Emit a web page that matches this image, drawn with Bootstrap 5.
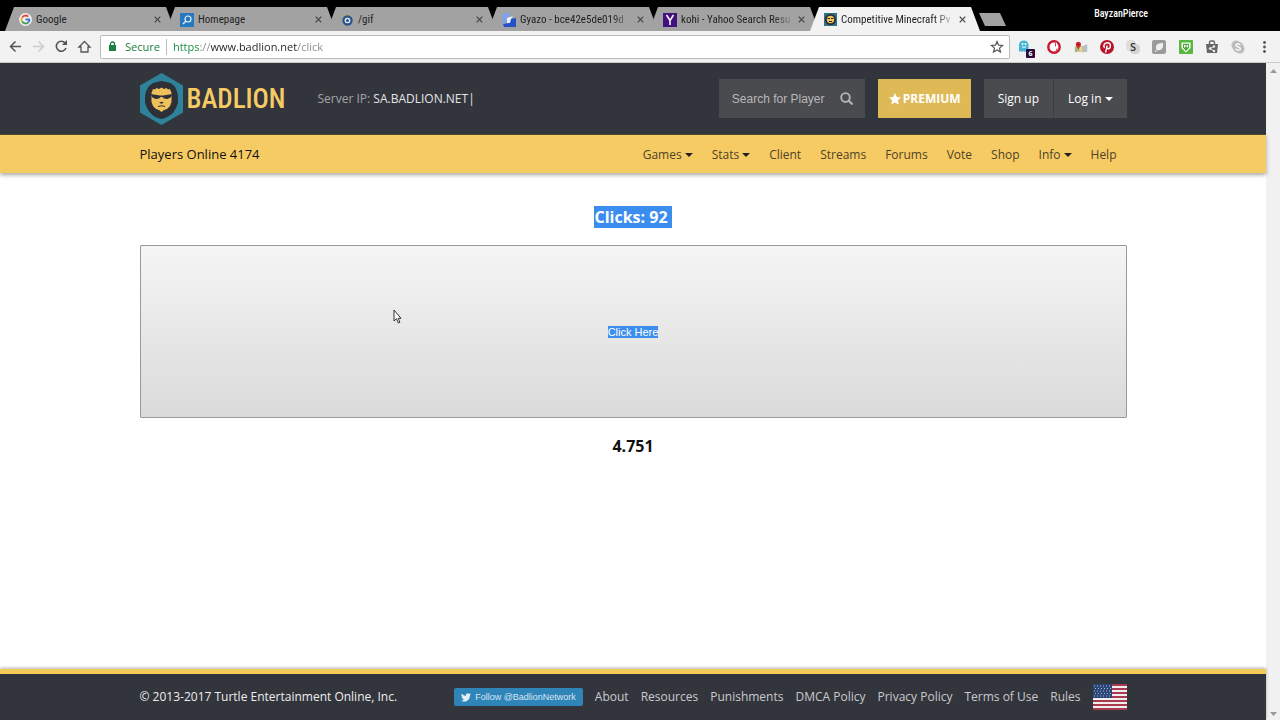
<!DOCTYPE html>
<html lang="en">
<head>
<meta charset="utf-8">
<meta name="viewport" content="width=device-width, initial-scale=1">
<title>Competitive Minecraft PvP</title>
<link href="https://cdn.jsdelivr.net/npm/bootstrap@5.3.0/dist/css/bootstrap.min.css" rel="stylesheet">
<style>
:root { --dark: #33353d; --gold: #f7cb63; --teal: #2e8299; }
body { font: 13px/20px "Open Sans", sans-serif; color: #111; background: #fff; }
a { text-decoration: none; }
svg { display: block; flex: none; }

/* browser chrome */
.tab-strip { height: 31px; background: #000; padding-left: 5px; }
.tab-list { flex: 0 1 966px; min-width: 0; }
.browser-tab { flex: 1 1 0; min-width: 0; height: 24px; margin-right: -9px; padding: 1px 14px 0; gap: 4px;
  background: #a2a2a2; color: #222; font: 11px/22px "Roboto Condensed", Roboto, sans-serif;
  clip-path: polygon(9px 0, calc(100% - 9px) 0, 100% 100%, 0 100%); }
.browser-tab.current { background: #f2f2f2; z-index: 2; }
.tab-title { color: inherit; overflow: hidden; white-space: nowrap; flex: 1; min-width: 0; }
.faded { -webkit-mask-image: linear-gradient(90deg, #000 82%, transparent); mask-image: linear-gradient(90deg, #000 82%, transparent); }
.plain-btn { border: 0; background: none; padding: 0; color: inherit; }
.new-tab { width: 27px; height: 13px; margin: 8px 0 0 8px; background: #a2a2a2; clip-path: polygon(0 0, 21px 0, 27px 100%, 6px 100%); }
.profile { font: 500 10px/28px "Roboto Condensed", Roboto, sans-serif; color: #fff; margin-right: 132px; }
.tool-bar { height: 32px; background: #f2f2f2; border-bottom: 1px solid #c9cbc9; padding: 0 11px 0 8px; }
.address { height: 24px; background: #fff; border: 1px solid #bbb; border-radius: 2px; padding: 0 5px 0 7px; font-size: 11px; }
.secure { color: #1b8043; font-size: 11px; padding-right: 6px; margin-right: 6px; border-right: 1px solid #bbb; line-height: 16px; }
.address input { flex: 1; min-width: 0; border: 0; outline: 0; padding: 0; color: #222; font-size: 11px;
  background: linear-gradient(90deg, #0f8a3f 27px, #888 27px 38px, #222 38px 124px, #888 124px) text;
  -webkit-background-clip: text; -webkit-text-fill-color: transparent; }
.ext { width: 227px; margin: 0 15px 0 8px; }

/* site */
.site { min-height: calc(100vh - 63px); border-right: 14px solid #f1f1f1; }
.wrap { width: 78%; max-width: 987px; margin: 0 auto; }
.site-head { background: var(--dark); height: 71px; }
.brand-name { font: 500 27px/36px "Roboto Condensed", Roboto, sans-serif; color: var(--gold); }
.brand { width: 143px; }
.server { color: #a3a4a8; font-size: 12px; margin-left: 35px; }
.server span { color: #e4e4e6; }
.head-tools { gap: 13px; }
.search { height: 39px; width: 146px; background: #4a4b4e; padding: 0 12px 0 13px; }
.search input { flex: 1; min-width: 0; border: 0; outline: 0; background: none; color: #fff; padding: 0; font: 12px/20px "Liberation Sans", sans-serif; }
.search input::placeholder { color: #b7b8ba; opacity: 1; }
.head-btn { height: 39px; border: 0; border-radius: 0; background: #4a4b4e; color: #fff; font-size: 12px; padding: 0 14px; }
.head-btn + .head-btn { border-left: 1px solid #3c3d43; }
.premium { background: #e0b957; font-weight: 700; padding: 0 10px 0 11px; gap: 2px; }
.site-nav { background: var(--gold); height: 39px; border-top: 1px solid #4f4836; box-shadow: 0 2px 4px rgba(0,0,0,.35); position: relative; }
.site-nav a { color: #4d4227; font-size: 12px; }
.menu-links { gap: 19px; padding: 1px 10px 0 0; }
.dropdown-toggle::after { margin-left: 3px; vertical-align: 2px; border-top-width: 4px; border-left-width: 4px; border-right-width: 4px; color: #222; }
.head-btn.dropdown-toggle::after { color: #fff; }
.picked { background: #3b8df0; color: #fff; }
.clicker { padding-top: 33px; }
.score { font-size: 16px; line-height: 22px; font-weight: 700; margin: 0; }
.click-pad { width: 100%; height: 173px; border: 1px solid #999; border-radius: 1px; background: linear-gradient(#f5f5f5, #dadada);
  font: 11px/14px "Liberation Sans", sans-serif; margin: 17px 0; }
.pointer { position: absolute; left: 253px; top: 81px; }
.site-foot { background: var(--dark); border-top: 5px solid #f2cb59; box-shadow: 0 -1px 3px rgba(0,0,0,.3); height: 51px; font-size: 12px; color: #eee; }
.foot-links { gap: 12px; }
.foot-links a { color: #c9cacc; }
.foot-links .follow { background: #2f84b8; color: #d6e6f2; border-radius: 2px; height: 18px; padding: 0 7px; gap: 4px; font: 9px/16px "Liberation Sans", sans-serif; }
.scroll-marks { position: absolute; right: 0; top: 64px; bottom: 0; width: 14px; padding: 5px 0 4px; }
</style>
</head>
<body class="d-flex flex-column min-vh-100 position-relative">

<header>
  <div class="tab-strip d-flex align-items-end">
    <nav class="tab-list d-flex" aria-label="Tabs">
      <div class="browser-tab d-flex align-items-center">
        <svg width="13" height="13" viewBox="0 0 14 14"><circle cx="7" cy="7" r="7" fill="#eee"/><g fill="none" stroke-width="2"><path d="M3.3 5A4.2 4.2 0 0 1 10 4" stroke="#df4b3c"/><path d="M3.3 5a4.2 4.2 0 0 0 0 4" stroke="#eab52c"/><path d="M3.3 9A4.2 4.2 0 0 0 10 10" stroke="#3b9d50"/><path d="M10 10a4 4 0 0 0 1.1-3H7" stroke="#3d78d8"/></g></svg>
        <a href="#" class="tab-title">Google</a><button class="plain-btn" aria-label="Close"><svg width="7" height="7" viewBox="0 0 7 7"><path d="M.7.7l5.6 5.6M6.3.7L.7 6.3" stroke="#444" stroke-width="1.2"/></svg></button>
      </div>
      <div class="browser-tab d-flex align-items-center">
        <svg width="14" height="14" viewBox="0 0 14 14"><path fill="#2878be" d="M0 0h14v14H0z"/><circle cx="8" cy="6" r="3" fill="none" stroke="#e6f0fa" stroke-width="1.2"/><path d="M6 8l-3 3" stroke="#e6f0fa" stroke-width="1.4"/></svg>
        <a href="#" class="tab-title">Homepage</a><button class="plain-btn" aria-label="Close"><svg width="7" height="7" viewBox="0 0 7 7"><path d="M.7.7l5.6 5.6M6.3.7L.7 6.3" stroke="#444" stroke-width="1.2"/></svg></button>
      </div>
      <div class="browser-tab d-flex align-items-center">
        <svg width="13" height="13" viewBox="0 0 13 13"><path d="M2 5l-1-3 3 1 2-2 2 2 3-1-1 3" fill="#bba85a"/><circle cx="6.5" cy="7.5" r="4" fill="none" stroke="#28558f" stroke-width="2.4"/><circle cx="6.5" cy="7.500" r="2.800" fill="#e4eaf3"/><circle cx="6.500" cy="7.500" r="1.500" fill="#28558f"/></svg>
        <a href="#" class="tab-title">/gif</a><button class="plain-btn" aria-label="Close"><svg width="7" height="7" viewBox="0 0 7 7"><path d="M.7.7l5.6 5.6M6.3.7L.7 6.3" stroke="#444" stroke-width="1.2"/></svg></button>
      </div>
      <div class="browser-tab d-flex align-items-center">
        <svg width="14" height="14" viewBox="0 0 14 14"><path d="M0 1l9-1-3 5v4l-5 2z" fill="#7ba4ed"/><path d="M1 11l6-1 1-4 6-1v9H2z" fill="#2452c4"/><path d="M5 5l6-2-2 3-1 4-3 0z" fill="#eef3ff"/></svg>
        <a href="#" class="tab-title faded">Gyazo - bce42e5de019d</a><button class="plain-btn" aria-label="Close"><svg width="7" height="7" viewBox="0 0 7 7"><path d="M.7.7l5.6 5.6M6.3.7L.7 6.3" stroke="#444" stroke-width="1.2"/></svg></button>
      </div>
      <div class="browser-tab d-flex align-items-center">
        <svg width="14" height="14" viewBox="0 0 14 14"><path fill="#43107f" d="M0 0h14v14H0z"/><path d="M3.5 2L7 7.5 10.500 2M7 7v5" fill="none" stroke="#fff" stroke-width="1.5"/></svg>
        <a href="#" class="tab-title faded">kohi - Yahoo Search Resu</a><button class="plain-btn" aria-label="Close"><svg width="7" height="7" viewBox="0 0 7 7"><path d="M.7.7l5.6 5.6M6.3.7L.7 6.3" stroke="#444" stroke-width="1.2"/></svg></button>
      </div>
      <div class="browser-tab current d-flex align-items-center">
        <svg width="13" height="13" viewBox="0 0 13 13"><path fill="#2e7387" d="M0 0h13v13H0z"/><circle cx="6.500" cy="6.500" r="5.500" fill="#2c2d33"/><circle cx="6.500" cy="6.500" r="3.700" fill="#efc15a"/><path d="M3.500 5.500h2.500M7 5.500h2.500M5 8.500h3" stroke="#2c2d33"/></svg>
        <a href="#" class="tab-title faded">Competitive Minecraft Pv</a><button class="plain-btn" aria-label="Close"><svg width="7" height="7" viewBox="0 0 7 7"><path d="M.7.7l5.6 5.6M6.3.7L.7 6.3" stroke="#444" stroke-width="1.2"/></svg></button>
      </div>
    </nav>
    <button class="plain-btn new-tab align-self-center" aria-label="New tab"></button>
    <span class="profile ms-auto align-self-start">BayzanPierce</span>
  </div>

  <div class="tool-bar d-flex align-items-center">
    <div class="d-flex gap-2 me-2">
      <button class="plain-btn" aria-label="Back"><svg width="15" height="15" viewBox="0 0 15 15" fill="none" stroke="#555" stroke-width="1.5"><path d="M13 7.500H2.500M7.500 2.500l-5 5 5 5"/></svg></button>
      <button class="plain-btn" aria-label="Forward"><svg width="15" height="15" viewBox="0 0 15 15" fill="none" stroke="#ccc" stroke-width="1.500"><path d="M2 7.500h10.500M7.500 2.500l5 5-5 5"/></svg></button>
      <button class="plain-btn" aria-label="Reload"><svg width="15" height="15" viewBox="0 0 15 15"><path d="M12 9a5 5 0 1 1-.8-5" fill="none" stroke="#555" stroke-width="1.600"/><path d="M13 1v5H8z" fill="#555"/></svg></button>
      <button class="plain-btn" aria-label="Home"><svg width="15" height="15" viewBox="0 0 15 15" fill="none" stroke="#555" stroke-width="1.300"><path d="M2 8l5.500-5.500L13 8h-2v5H4V8z"/></svg></button>
    </div>
    <div class="address d-flex align-items-center flex-grow-1">
      <svg class="me-2" width="9" height="11" viewBox="0 0 9 11"><path d="M1 4h7v6H1z" fill="#1b8043"/><path d="M2.500 5V3a2 2 0 0 1 4 0v2" fill="none" stroke="#1b8043" stroke-width="1.300"/></svg>
      <label class="secure" for="url">Secure</label>
      <input id="url" type="text" value="https://www.badlion.net/click" spellcheck="false">
      <button class="plain-btn" aria-label="Bookmark"><svg width="14" height="14" viewBox="0 0 14 14"><path d="M7 1.500l1.600 3.700 4 .3-3.100 2.600 1 3.900L7 9.900 3.500 12l1-3.900L1.400 5.500l4-.3z" fill="none" stroke="#555" stroke-width="1.200"/></svg></button>
    </div>
    <div class="ext d-flex align-items-center justify-content-between">
      <svg width="17" height="24" viewBox="0 0 17 24"><path d="M1 17V9a5 5 0 0 1 9.500 0v8l-2-1-1.500 1-1.500-1-1.500 1-1.500-1z" fill="#45b6d6"/><circle cx="4.500" cy="9" r="1" fill="#fff"/><circle cx="7.500" cy="9" r="1" fill="#fff"/><path d="M4 11.500q2 2 4 0" stroke="#fff" fill="none"/><rect x="8" y="14" width="9" height="9" rx="1" fill="#2c0a3a"/><text x="12.500" y="21" font-size="7" font-weight="700" fill="#fff" text-anchor="middle">6</text></svg>
      <svg width="14" height="14" viewBox="0 0 14 14"><circle cx="7" cy="7" r="5.700" fill="#fff" stroke="#cc1730" stroke-width="2.400"/><path d="M4.500 3.500L10 2.500V8l-1.500 3H6L4 8z" fill="#fff"/><path d="M8.500 3v3.500M10 8.500L9 11" stroke="#cc1730" stroke-width=".8"/></svg>
      <svg width="14" height="14" viewBox="0 0 16 14"><path d="M1 7l4-2 5 1 5-2v8l-5 1-5-1-4 1z" fill="#9fb97f"/><path d="M6 13V6l4 1v6z" fill="#e7d38a"/><path d="M10 6l5-2v8l-5 1z" fill="#b4bec9"/><path d="M5 10C4 7 2 6 2 4a3 3 0 0 1 6 0c0 2-2 3-3 6" fill="#d32b2f"/><circle cx="5" cy="4" r="1.100" fill="#7c1017"/></svg>
      <svg width="14" height="14" viewBox="0 0 14 14"><circle cx="7" cy="7" r="7" fill="#b9132a"/><path d="M5.600 12.500L7.200 5.500M4.500 8C2.600 4.500 5.300 2.700 7.300 2.700c4.400 0 3.600 6 .8 6-1.300 0-1.600-.9-1.600-.9" fill="none" stroke="#fff" stroke-width="1.400"/></svg>
      <svg width="14" height="16" viewBox="0 0 14 16"><rect x="0" y="1" width="10" height="11" rx="4" fill="#ddd"/><rect x="4" y="5" width="10" height="10" rx="4" fill="#d4d4d4"/><text x="7" y="12" font-size="11" font-weight="600" fill="#333" text-anchor="middle">S</text></svg>
      <svg width="14" height="14" viewBox="0 0 14 14"><rect width="14" height="14" rx="2" fill="#9b9b9b"/><path d="M4 6q1-3 7-3v4q-1 3-5 3.500L4 9z" fill="#eee"/><path d="M3 12l2.500-3" stroke="#eee"/></svg>
      <svg width="14" height="14" viewBox="0 0 14 14"><rect width="14" height="14" rx="1" fill="#56b93d"/><path d="M2.500 2.500h9V8L7 12.500 2.500 8z" fill="#fff"/><path d="M4 3.700h6v4L7 11 4 7.700z" fill="#4da638"/><path d="M5.500 7.500V5L7 6.500 8.500 5v2.500" stroke="#fff" fill="none"/></svg>
      <svg width="14" height="14" viewBox="0 0 14 14"><path d="M1 4h12l-1 9H2z" fill="#666"/><path d="M4.500 5V2.500A1.500 1.500 0 0 1 6 1h2a1.500 1.500 0 0 1 1.500 1.500V5" fill="none" stroke="#666" stroke-width="1.400"/><path d="M9 6.500l-4 2 4 2.500" fill="none" stroke="#eee"/><g fill="#eee"><circle cx="9" cy="6.500" r="1.200"/><circle cx="5" cy="8.500" r="1.200"/><circle cx="9" cy="11" r="1.200"/></g></svg>
      <svg width="14" height="14" viewBox="0 0 14 14"><circle cx="5" cy="5" r="4.500" fill="#bdbdbd"/><circle cx="9" cy="9" r="4.500" fill="#bdbdbd"/><circle cx="7" cy="7" r="5.500" fill="#bdbdbd"/><path d="M9.300 5C8.500 3.300 4.800 3.500 5 5.400c.2 1.700 4.300 1.200 4.300 3.200 0 2.100-4 2-4.700.2" fill="none" stroke="#fff" stroke-width="1.300"/></svg>
    </div>
    <button class="plain-btn" aria-label="Menu"><svg width="9" height="14" viewBox="0 0 9 14" fill="#555"><circle cx="4.500" cy="2.500" r="1.400"/><circle cx="4.500" cy="7" r="1.400"/><circle cx="4.500" cy="11.500" r="1.400"/></svg></button>
  </div>
</header>

<div class="site d-flex flex-column flex-grow-1">
  <div class="site-head d-flex align-items-center">
    <div class="wrap d-flex align-items-center">
      <a href="#" class="brand d-flex align-items-center gap-1" aria-label="Badlion home">
        <svg width="43" height="52" viewBox="0 0 43 52"><path d="M21.500 0L43 12.500v27L21.500 52 0 39.500v-27z" fill="#2e8299"/><path d="M9 13l4-3 4-1 4.500-1 5 1 4 1 4 3 2 4 1.500 5v8l-2 5-3 5-4 3-4 2-3.500 1-4-1-4-2-4-4-2.500-4L5 30v-7l1-5z" fill="#2e3037"/><path d="M13 16l2 .5 1.500-1.500 2.500 1 2.500-1.500L24 16l2.500-1 1.500 1.500 2-.5 1.500 4v9l-1.500 4-3 3-3 1-2.500 2-2.500-2-3-1-3-3-1.500-4v-9z" fill="#efc15a"/><path d="M10.500 21l9.500 1.500h3l9.500-1.500-2 3.500-3 1.500-3.500-.5-1.500-1.500h-2l-1.500 1.500-3.500.5-3-1.500z" fill="#2e3037"/><path d="M19 29h5l-2.500 2z" fill="#2e3037"/><path d="M18 33.500q3.500-1.500 7 0" fill="none" stroke="#2e3037"/></svg>
        <span class="brand-name">BADLION</span>
      </a>
      <div class="server flex-shrink-0">Server IP: <span>SA.BADLION.NET|</span></div>
      <div class="head-tools d-flex ms-auto">
        <form class="search d-flex align-items-center">
          <input type="text" placeholder="Search for Player" aria-label="Search for Player">
          <button type="button" class="plain-btn" aria-label="Search"><svg width="13" height="13" viewBox="0 0 13 13"><circle cx="5.500" cy="5.500" r="4.300" fill="none" stroke="#b7b8ba" stroke-width="1.800"/><path d="M8.500 8.500l4 4" stroke="#b7b8ba" stroke-width="2"/></svg></button>
        </form>
        <button class="head-btn premium d-flex align-items-center"><svg width="12" height="12" viewBox="0 0 12 12"><path d="M6 0l1.800 3.900 4.200.5-3.100 2.900.8 4.200L6 9.400l-3.700 2.100.8-4.200L0 4.400l4.200-.5z" fill="#fff"/></svg>PREMIUM</button>
        <div class="d-flex"><button class="head-btn">Sign up</button><button class="head-btn dropdown-toggle">Log in</button></div>
      </div>
    </div>
  </div>
  <nav class="site-nav d-flex align-items-center">
    <div class="wrap d-flex align-items-center justify-content-between">
      <span>Players Online 4174</span>
      <div class="menu-links d-flex">
        <a href="#" class="dropdown-toggle">Games</a><a href="#" class="dropdown-toggle">Stats</a><a href="#">Client</a><a href="#">Streams</a><a href="#">Forums</a><a href="#">Vote</a><a href="#">Shop</a><a href="#" class="dropdown-toggle">Info</a><a href="#">Help</a>
      </div>
    </div>
  </nav>

  <main class="wrap clicker flex-grow-1 text-center">
    <h1 class="score"><span class="picked pe-1">Clicks: 92</span></h1>
    <div class="position-relative">
      <button class="click-pad"><span class="picked">Click Here</span></button>
      <svg class="pointer" width="9" height="15" viewBox="0 0 9 15"><path d="M1 1v11l2.500-2.300L5.300 14l1.600-.7L5.200 9.300H8z" fill="#fff" stroke="#333"/></svg>
    </div>
    <p class="score">4.751</p>
  </main>

  <footer class="site-foot d-flex align-items-center">
    <div class="wrap d-flex align-items-center justify-content-between">
      <span>© 2013-2017 Turtle Entertainment Online, Inc.</span>
      <div class="foot-links d-flex align-items-center">
        <a href="#" class="follow d-flex align-items-center"><svg width="10" height="9" viewBox="0 0 24 20"><path d="M24 2.400a10 10 0 0 1-2.800.8A5 5 0 0 0 23.300.5a10 10 0 0 1-3.100 1.200A4.900 4.900 0 0 0 11.800 6.200 14 14 0 0 1 1.700 1a4.900 4.900 0 0 0 1.500 6.600A5 5 0 0 1 1 7a4.900 4.900 0 0 0 3.900 4.900 5 5 0 0 1-2.200.1 4.900 4.900 0 0 0 4.600 3.400A10 10 0 0 1 0 17.500 14 14 0 0 0 21.500 5z" fill="#e4eef6"/></svg>Follow @BadlionNetwork</a>
        <a href="#">About</a><a href="#">Resources</a><a href="#">Punishments</a><a href="#">DMCA Policy</a><a href="#">Privacy Policy</a><a href="#">Terms of Use</a><a href="#">Rules</a>
        <a href="#" aria-label="United States"><svg width="34" height="26" viewBox="0 0 34 26"><path fill="#f2eef0" d="M0 0h34v26H0z"/><path d="M0 1h34M0 5h34M0 9h34M0 13h34M0 17h34M0 21h34M0 25h34" stroke="#a83a50" stroke-width="2"/><path fill="#2c4577" d="M0 0h19v14H0z"/><path d="M1 2h17M2 4.500h17M1 7h17M2 9.500h17M1 12h17" stroke="#a9b9d8" stroke-width="1" stroke-dasharray="1 2"/></svg></a>
      </div>
    </div>
  </footer>
</div>
<div class="scroll-marks d-flex flex-column align-items-center justify-content-between" aria-hidden="true">
  <svg width="7" height="4" viewBox="0 0 7 4"><path d="M0 4l3.500-4L7 4z" fill="#999"/></svg>
  <svg width="7" height="4" viewBox="0 0 7 4"><path d="M0 0l3.500 4L7 0z" fill="#999"/></svg>
</div>
<script src="https://cdn.jsdelivr.net/npm/bootstrap@5.3.0/dist/js/bootstrap.bundle.min.js"></script>
</body>
</html>
